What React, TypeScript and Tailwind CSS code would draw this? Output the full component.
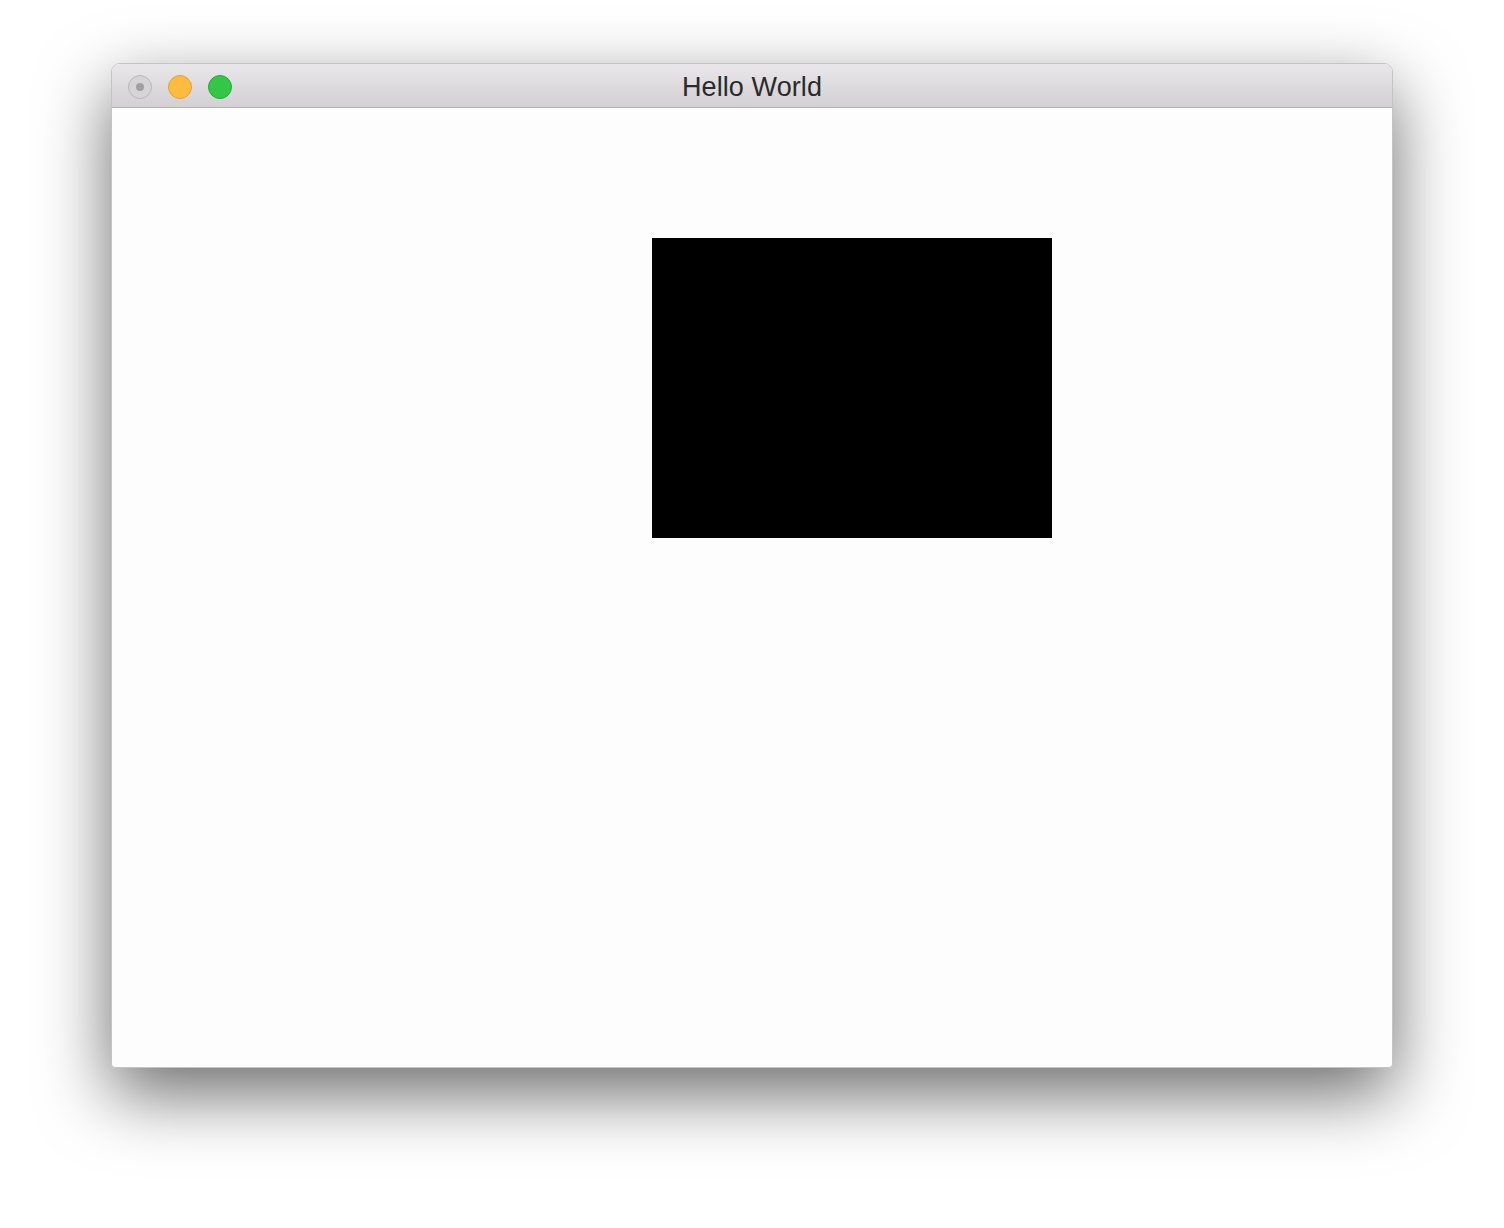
export default function App() {
    return (
        <div className="w-full h-[1228px] bg-white pt-[63px] pl-[111px]">
            {/* window */}
            <div className="w-[1282px] h-[1005px] flex flex-col rounded-t-[9px] rounded-b-[4px] border border-[#c4c4c4] bg-[#fdfdfd] shadow-[0_26px_70px_rgba(0,0,0,0.58)] overflow-hidden">
                {/* title bar */}
                <div className="relative h-[44px] shrink-0 flex items-center bg-gradient-to-b from-[#e9e7e9] to-[#d2d0d2] border-b border-[#b3b1b3]">
                    <div className="flex items-center gap-[16px] pl-[16px] pt-[2px]">
                        <div className="w-[24px] h-[24px] rounded-full bg-[#d6d4d6] border border-[#b9b7b9] flex items-center justify-center">
                            <div className="w-[8px] h-[8px] rounded-full bg-[#a19fa1]" />
                        </div>
                        <div className="w-[24px] h-[24px] rounded-full bg-[#fdbc40] border border-[#e2a42f]" />
                        <div className="w-[24px] h-[24px] rounded-full bg-[#33c748] border border-[#27aa35]" />
                    </div>
                    <div className="absolute inset-0 flex items-center justify-center pt-[4px] pointer-events-none">
                        <span className="text-[27px] leading-none text-[#2b2b2b] font-['Liberation_Sans',Arial,sans-serif] tracking-[0.1px]">
                            Hello World
                        </span>
                    </div>
                </div>
                {/* content */}
                <div className="flex-1 pt-[130px] pl-[540px]">
                    <div className="w-[400px] h-[300px] bg-black" />
                </div>
            </div>
        </div>
    );
}
